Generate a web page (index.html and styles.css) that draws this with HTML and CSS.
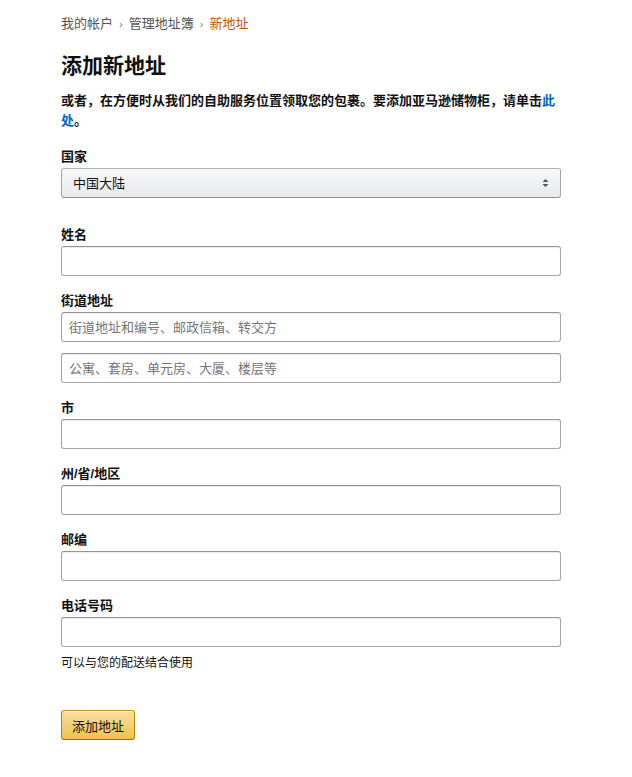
FILE: index.html
```html
<!DOCTYPE html>
<html lang="zh-CN">
<head>
<meta charset="utf-8">
<title>添加新地址</title>
<link rel="stylesheet" href="styles.css">
</head>
<body>
<div class="page">
  <nav class="crumbs">
    <a class="crumb" href="#">我的帐户</a>
    <span class="sep">›</span>
    <a class="crumb" href="#">管理地址簿</a>
    <span class="sep">›</span>
    <span class="crumb current">新地址</span>
  </nav>
  <h1 class="title">添加新地址</h1>
  <p class="intro">或者，在方便时从我们的自助服务位置领取您的包裹。要添加亚马逊储物柜，请单击<a class="link" href="#">此处</a>。</p>

  <form class="form">
    <div class="field field-country">
      <label class="label">国家</label>
      <div class="select">
        <span class="select-text">中国大陆</span>
        <svg class="select-arrow" width="7" height="10" viewBox="0 0 7 10"><path d="M3.5 1 L6.5 4 H0.5 Z M3.5 9 L6.5 6 H0.5 Z" fill="#555"/></svg>
      </div>
    </div>

    <div class="field">
      <label class="label">姓名</label>
      <input class="input" type="text">
    </div>

    <div class="field">
      <label class="label">街道地址</label>
      <input class="input" type="text" placeholder="街道地址和编号、邮政信箱、转交方">
      <input class="input input-second" type="text" placeholder="公寓、套房、单元房、大厦、楼层等">
    </div>

    <div class="field">
      <label class="label">市</label>
      <input class="input" type="text">
    </div>

    <div class="field">
      <label class="label">州/省/地区</label>
      <input class="input" type="text">
    </div>

    <div class="field">
      <label class="label">邮编</label>
      <input class="input" type="text">
    </div>

    <div class="field field-last">
      <label class="label">电话号码</label>
      <input class="input" type="text">
      <div class="hint">可以与您的配送结合使用</div>
    </div>

    <button class="button" type="button">添加地址</button>
  </form>
</div>
</body>
</html>
```
FILE: styles.css
```css
* { box-sizing: border-box; }
html, body { margin: 0; padding: 0; background: #fff; }
body {
  font-family: "Liberation Sans", "Noto Sans CJK SC", sans-serif;
  font-size: 13px;
  line-height: 19px;
  color: #111;
}
.page {
  width: 500px;
  margin-left: 61px;
  padding-top: 14px;
}
.crumbs {
  display: flex;
  align-items: center;
  gap: 6px;
  line-height: 20px;
  height: 20px;
}
.crumb { color: #555; text-decoration: none; }
.crumb.current { color: #c45500; }
.sep { color: #777; font-size: 11px; }
.title {
  margin: 17px 0 0;
  font-size: 21px;
  line-height: 30px;
  font-weight: 700;
  color: #111;
}
.intro {
  margin: 10px 0 0;
  font-weight: 700;
  line-height: 20px;
}
.link { color: #0066c0; text-decoration: none; }
.form { margin-top: 16px; }
.field { margin-bottom: 15px; }
.field-country { margin-bottom: 27px; }
.label {
  display: block;
  font-weight: 700;
  line-height: 19px;
  padding-bottom: 2px;
}
.select {
  height: 30px;
  border: 1px solid #adb1b8;
  border-color: #adb1b8 #a2a6ac #8d9096;
  border-radius: 3px;
  background: linear-gradient(to bottom, #f7f8fa, #e7e9ec);
  box-shadow: 0 1px 0 rgba(255,255,255,.6) inset;
  display: flex;
  align-items: center;
  justify-content: space-between;
  padding: 0 11px 0 11px;
}
.select-text { color: #111; }
.select-arrow { display: block; }
.input {
  display: block;
  width: 100%;
  height: 30px;
  border: 1px solid #a6a6a6;
  border-top-color: #949494;
  border-radius: 3px;
  box-shadow: 0 1px 0 rgba(255,255,255,.5), 0 1px 0 rgba(0,0,0,.07) inset;
  padding: 3px 7px;
  font-family: "Liberation Sans", "Noto Sans CJK SC", sans-serif;
  font-size: 13px;
  color: #111;
  background: #fff;
}
.input::placeholder { color: #767676; }
.input-second { margin-top: 11px; }
.field-last { margin-bottom: 0; }
.hint {
  margin-top: 8px;
  font-size: 12px;
  line-height: 17px;
  color: #111;
}
.button {
  margin-top: 38px;
  display: block;
  height: 30px;
  padding: 0 10px;
  border: 1px solid #a88734;
  border-color: #c89411 #b0820f #99710d;
  border-radius: 3px;
  background: linear-gradient(to bottom, #f7dfa5, #f0c14b);
  box-shadow: 0 1px 0 rgba(255,255,255,.4) inset;
  font-family: "Liberation Sans", "Noto Sans CJK SC", sans-serif;
  font-size: 13px;
  color: #111;
  cursor: pointer;
}
```
